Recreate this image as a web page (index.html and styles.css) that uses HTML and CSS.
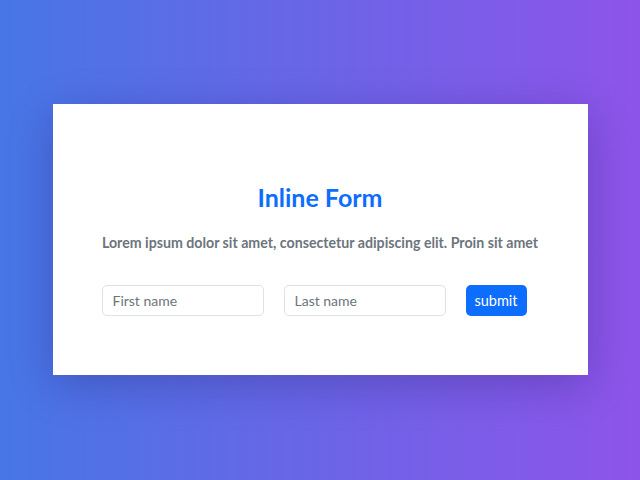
FILE: index.html
```html
<!DOCTYPE html>
<html lang="en">
<head>
<meta charset="utf-8">
<title>Inline Form</title>
<link rel="stylesheet" href="styles.css">
</head>
<body>
<main class="page">
  <section class="card">
    <h1 class="title">Inline Form</h1>
    <p class="lead">Lorem ipsum dolor sit amet, consectetur adipiscing elit. Proin sit amet</p>
    <form class="inline-form">
      <input class="field" type="text" placeholder="First name">
      <input class="field" type="text" placeholder="Last name">
      <button class="btn" type="button">submit</button>
    </form>
  </section>
</main>
</body>
</html>
```
FILE: styles.css
```css
* { box-sizing: border-box; }
html, body { margin: 0; height: 100%; }
body {
  font-family: Lato, "Noto Sans", sans-serif;
  background: linear-gradient(to right, #4776e6 0%, #8e54e9 100%);
}
.page {
  height: 480px;
  display: flex;
  justify-content: center;
  align-items: flex-start;
  padding-top: 104px;
}
.card {
  width: 535px;
  height: 271px;
  background: #fff;
  box-shadow: 0 10px 40px rgba(20, 10, 80, 0.25);
  padding: 79px 49px 0;
}
.title {
  margin: 0;
  text-align: center;
  color: #0d6efd;
  font-size: 25px;
  font-weight: 700;
  line-height: 29px;
}
.lead {
  margin: 20px 0 0;
  text-align: center;
  color: #6c757d;
  font-size: 14.2px;
  font-weight: 700;
  line-height: 21px;
  white-space: nowrap;
}
.inline-form {
  display: flex;
  gap: 20px;
  margin-top: 32px;
}
.field {
  width: 162px;
  height: 31px;
  border: 1px solid #dee2e6;
  border-radius: 5px;
  padding: 0 10px;
  font-family: inherit;
  font-size: 14px;
  color: #212529;
  background: #fff;
}
.field::placeholder { color: #6c757d; }
.btn {
  width: 61px;
  height: 31px;
  padding: 0;
  border: 0;
  border-radius: 5px;
  background: #0d6efd;
  color: #fff;
  font-family: inherit;
  font-size: 14.5px;
}
```
